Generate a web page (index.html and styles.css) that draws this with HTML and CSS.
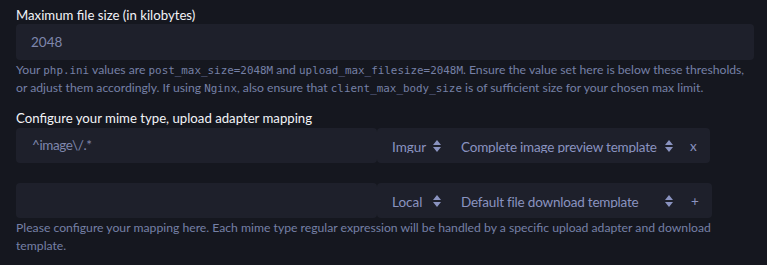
FILE: index.html
```html
<!DOCTYPE html>
<html lang="en">
<head>
    <meta charset="UTF-8">
    <meta name="viewport" content="width=device-width, initial-scale=1.0">
    <title>Upload settings</title>
    <link rel="stylesheet" href="styles.css">
</head>
<body>
    <div class="settings">
        <div class="field">
            <label class="field-label">Maximum file size (in kilobytes)</label>
            <div class="text-input">2048</div>
            <p class="help">Your <code>php.ini</code> values are <code>post_max_size=2048M</code> and <code>upload_max_filesize=2048M</code>. Ensure the value set here is below these thresholds, or adjust them accordingly. If using <code>Nginx</code>, also ensure that <code>client_max_body_size</code> is of sufficient size for your chosen max limit.</p>
        </div>

        <div class="field">
            <label class="field-label">Configure your mime type, upload adapter mapping</label>

            <div class="mapping-row">
                <div class="text-input regex">^image\/.*</div>
                <div class="select-group">
                    <div class="select adapter"><span class="select-value">Imgur</span><svg class="arrows" viewBox="0 0 8 12"><path d="M4 0 L8 5 H0 Z M0 7 H8 L4 12 Z"/></svg></div>
                    <div class="select template"><span class="select-value">Complete image preview template</span><svg class="arrows" viewBox="0 0 8 12"><path d="M4 0 L8 5 H0 Z M0 7 H8 L4 12 Z"/></svg></div>
                    <button class="row-btn">x</button>
                </div>
            </div>

            <div class="mapping-row">
                <div class="text-input regex"></div>
                <div class="select-group">
                    <div class="select adapter"><span class="select-value">Local</span><svg class="arrows" viewBox="0 0 8 12"><path d="M4 0 L8 5 H0 Z M0 7 H8 L4 12 Z"/></svg></div>
                    <div class="select template"><span class="select-value">Default file download template</span><svg class="arrows" viewBox="0 0 8 12"><path d="M4 0 L8 5 H0 Z M0 7 H8 L4 12 Z"/></svg></div>
                    <button class="row-btn add">+</button>
                </div>
            </div>

            <p class="help">Please configure your mapping here. Each mime type regular expression will be handled by a specific upload adapter and download template.</p>
        </div>
    </div>
</body>
</html>
```

FILE: styles.css
```css
* {
    margin: 0;
    padding: 0;
    box-sizing: border-box;
}

body {
    font-family: Lato, "Noto Sans", sans-serif;
    background-color: #15171f;
    color: #fff;
    font-size: 13px;
}

.settings {
    width: 754px;
    padding: 6px 0 0 16px;
}

.field-label {
    display: block;
    font-size: 13.2px;
    line-height: 18px;
    color: #f2f3f7;
}

.text-input {
    height: 36px;
    line-height: 36px;
    padding: 0 15px;
    background-color: #1e202b;
    border-radius: 4px;
    color: #7f87ad;
    font-size: 13.5px;
}

.help {
    margin-top: 1px;
    font-size: 12.2px;
    line-height: 18px;
    color: #7680a6;
}

.help code {
    font-family: "DejaVu Sans Mono", monospace;
    font-size: 10.9px;
    line-height: 1;
}

.field + .field {
    margin-top: 12px;
}

.mapping-row {
    display: flex;
    margin-top: 1px;
}

.mapping-row + .mapping-row {
    margin-top: 20px;
}

.regex {
    width: 361px;
    height: 35px;
    line-height: 35px;
    flex-shrink: 0;
    padding-left: 16px;
    letter-spacing: -0.4px;
}

.select-group {
    display: flex;
    align-items: center;
    height: 35px;
    background-color: #1e202b;
    border-radius: 4px;
    padding-left: 15px;
    color: #8a93c0;
    font-size: 13.5px;
}

.select {
    display: flex;
    align-items: center;
}

.select-value {
    display: block;
    height: 14px;
    line-height: 16px;
    overflow: hidden;
    white-space: nowrap;
}

.adapter .select-value {
    width: 41px;
}

.template {
    margin-left: 20px;
}

.template .select-value {
    width: 204px;
    letter-spacing: -0.2px;
}

.arrows {
    width: 8px;
    height: 12px;
    fill: #8a93c0;
}

.row-btn {
    background: none;
    border: none;
    color: #8a93c0;
    font-family: inherit;
    font-size: 13.5px;
    padding: 0 13px 0 17px;
}

.row-btn.add {
    padding-left: 18px;
}
```
